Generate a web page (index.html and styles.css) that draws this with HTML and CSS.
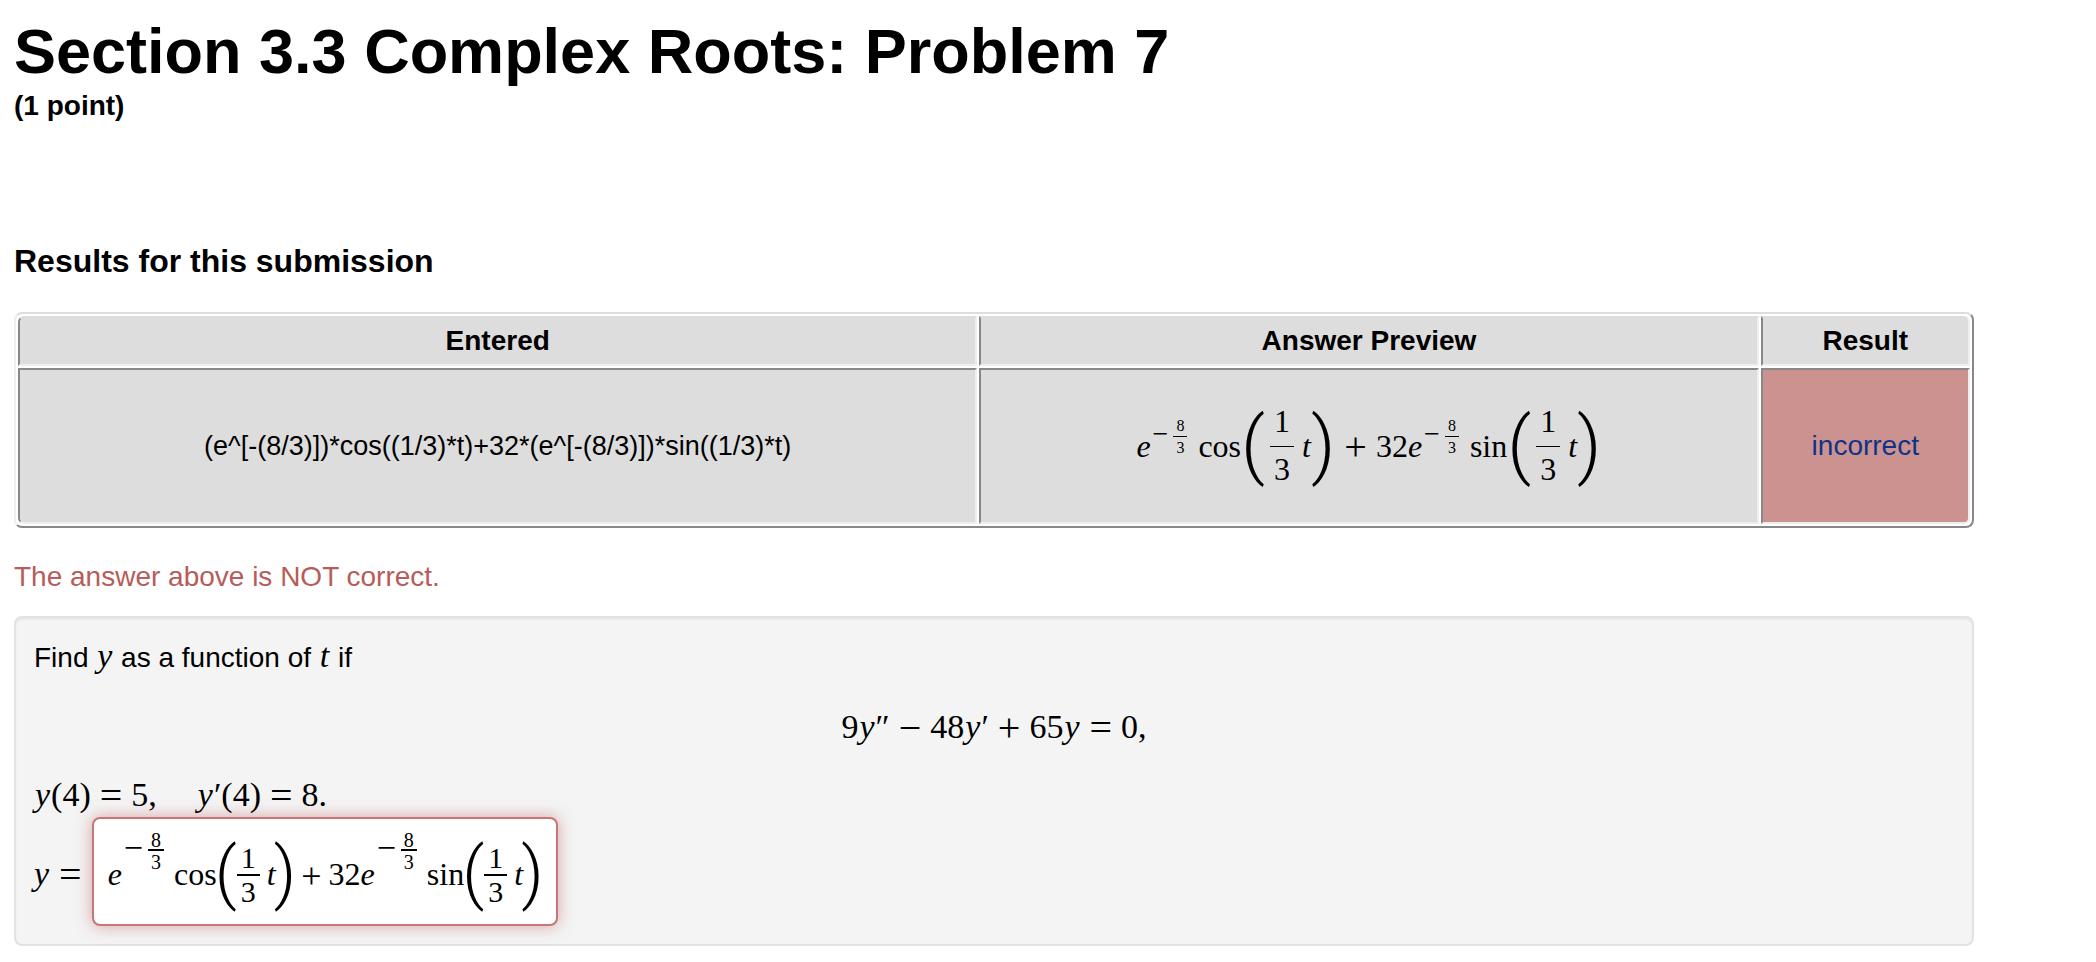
FILE: index.html
```html
<!DOCTYPE html>
<html lang="en">
<head>
    <meta charset="UTF-8">
    <meta name="viewport" content="width=device-width, initial-scale=1.0">
    <title>Section 3.3 Complex Roots: Problem 7</title>
    <link rel="stylesheet" href="styles.css">
</head>
<body>
    <div class="page">
        <h1>Section 3.3 Complex Roots: Problem 7</h1>
        <p class="points">(1 point)</p>

        <!-- Submission results -->
        <h2>Results for this submission</h2>
        <table class="results">
            <colgroup>
                <col class="col-entered">
                <col class="col-preview">
                <col>
            </colgroup>
            <thead>
                <tr>
                    <th scope="col">Entered</th>
                    <th scope="col">Answer Preview</th>
                    <th scope="col">Result</th>
                </tr>
            </thead>
            <tbody>
                <tr>
                    <td class="entered">(e^[-(8/3)])*cos((1/3)*t)+32*(e^[-(8/3)])*sin((1/3)*t)</td>
                    <td>
                        <span class="math preview"><i>e</i><span class="sup">−<span class="frac"><span>8</span><span>3</span></span></span><span class="fn">cos</span><span class="paren">(</span><span class="frac"><span>1</span><span>3</span></span><i>t</i><span class="paren">)</span><span class="op">+</span>32<i>e</i><span class="sup">−<span class="frac"><span>8</span><span>3</span></span></span><span class="fn">sin</span><span class="paren">(</span><span class="frac"><span>1</span><span>3</span></span><i>t</i><span class="paren">)</span></span>
                    </td>
                    <td class="incorrect"><a href="#answer">incorrect</a></td>
                </tr>
            </tbody>
        </table>
        <p class="message">The answer above is NOT correct.</p>

        <!-- Problem text -->
        <div class="problem">
            <p>Find <i class="math">y</i> as a function of <i class="math">t</i> if</p>
            <p class="math equation">9<i>y</i>″<span class="op">−</span>48<i>y</i>′<span class="op">+</span>65<i>y</i><span class="op">=</span>0,</p>
            <p class="math"><i>y</i>(4)<span class="op">=</span>5,<span class="quad"></span><i>y</i>′(4)<span class="op">=</span>8.</p>
            <div class="answer-row">
                <span class="math" id="answer-label"><i>y</i><span class="op">=</span></span>
                <div class="math answer" id="answer" role="textbox" contenteditable="true" spellcheck="false" aria-labelledby="answer-label"><i>e</i><span class="sup">−<span class="frac"><span>8</span><span>3</span></span></span><span class="fn">cos</span><span class="paren">(</span><span class="frac"><span>1</span><span>3</span></span><i>t</i><span class="paren">)</span><span class="op">+</span>32<i>e</i><span class="sup">−<span class="frac"><span>8</span><span>3</span></span></span><span class="fn">sin</span><span class="paren">(</span><span class="frac"><span>1</span><span>3</span></span><i>t</i><span class="paren">)</span></div>
            </div>
        </div>
    </div>
</body>
</html>
```
FILE: styles.css
```css
* {
    box-sizing: border-box;
}

body {
    margin: 0;
    background-color: #fff;
    color: #000;
    font-family: "Liberation Sans", Arial, sans-serif;
    font-size: 28px;
    line-height: 40px;
}

.page {
    padding: 16px 122px 18px 14px;
}

h1, h2, p {
    margin: 0;
}

h1 {
    font-size: 63px;
    line-height: 70px;
}

.points {
    font-weight: bold;
}

h2 {
    margin-top: 115px;
    font-size: 32px;
}

/* results table */
.results {
    width: 100%;
    margin-top: 31px;
    table-layout: fixed;
    border: 2px solid;
    border-color: #ddd #888 #888 #eee;
    border-radius: 8px;
    border-collapse: separate;
    border-spacing: 2px;
    text-align: center;
}

.col-entered {
    width: 49.25%;
}

.col-preview {
    width: 40%;
}

.results th,
.results td {
    padding: 4px;
    background-color: #ddd;
    border: 2px solid;
    border-color: #888 #eee #eee #888;
}

.results th {
    height: 50px;
    padding: 3px;
    border-top-color: #ddd;
}

.results td {
    height: 156px;
}

.results th:first-child {
    border-top-left-radius: 6px;
}

.results th:last-child {
    border-top-right-radius: 6px;
}

.results td:first-child {
    border-bottom-left-radius: 6px;
}

.results td:last-child {
    border-bottom-right-radius: 6px;
}

.entered {
    font-size: 27px;
}

.results .incorrect {
    background-color: #cb9290;
}

.incorrect a {
    color: #0f3388;
    text-decoration: none;
}

.message {
    margin-top: 29px;
    color: #b75c59;
}

/* problem box */
.problem {
    margin-top: 19px;
    padding: 18px;
    background-color: #f4f4f4;
    border: 2px solid #e2e2e2;
    border-radius: 8px;
    box-shadow: inset 0 2px 2px rgba(0, 0, 0, 0.05);
}

.problem p i {
    margin: 0 1px;
}

.equation {
    margin: 29px 0 28px;
    text-align: center;
}

.answer-row {
    display: flex;
    align-items: baseline;
    margin-top: 2px;
}

.answer {
    height: 109px;
    padding: 7px 14px 0;
    background-color: #fff;
    border: 2px solid #c67775;
    border-radius: 8px;
    box-shadow: 0 0 16px rgba(190, 80, 80, 0.5);
    outline: none;
}

/* math */
.math {
    font-family: "Liberation Serif", "Times New Roman", serif;
    font-size: 34px;
    white-space: nowrap;
}

.op {
    margin: 0 9px;
    font-size: 40px;
    line-height: 0;
    vertical-align: -3px;
}

.quad {
    margin-left: 40px;
}

#answer-label .op {
    margin: 0 10px;
}

.preview,
.answer {
    font-size: 32px;
    line-height: 96px;
}

.fn {
    margin-left: 11px;
}

/* tall delimiters around the fractions */
.paren {
    font-family: Roboto, sans-serif;
    font-size: 75px;
    font-weight: 300;
    line-height: 0;
    vertical-align: -13px;
}

.frac {
    display: inline-flex;
    flex-direction: column;
    margin: 0 8px 0 5px;
    line-height: 32px;
    text-align: center;
    vertical-align: 25px;
}

.frac span {
    padding: 0 4px;
}

.frac span:first-child {
    padding-bottom: 9px;
    border-bottom: 1px solid #000;
}

.frac span:last-child {
    padding-top: 6px;
}

.sup {
    margin-left: 2px;
    font-size: 28px;
    line-height: 0;
    vertical-align: 14px;
}

.sup .frac {
    margin: 0 0 0 5px;
    font-size: 16px;
    line-height: 16px;
    vertical-align: 12px;
}

.sup .frac span {
    padding: 0 3px;
}

.sup .frac span:first-child {
    padding-bottom: 2px;
}

.sup .frac span:last-child {
    padding-top: 3px;
}

/* the answer box sets its fractions tighter, with heavier bars */
.answer .fn {
    margin-left: 10px;
}

.answer .op {
    margin: 0 7px;
    font-size: 36px;
}

.answer .paren {
    margin: 0 -2px;
    font-size: 69px;
    vertical-align: -11px;
}

.answer .frac {
    margin: 0 7px 0 2px;
    font-size: 30px;
    line-height: 28px;
    vertical-align: 17px;
}

.answer .frac span:first-child {
    padding-bottom: 2px;
    border-bottom-width: 2px;
}

.answer .frac span:last-child {
    padding-top: 2px;
}

.answer .sup {
    font-size: 34px;
    vertical-align: 26px;
}

.answer .sup .frac {
    margin: 0 0 0 5px;
    font-size: 20px;
    line-height: 18px;
    vertical-align: 12px;
}

.answer .sup .frac span:first-child {
    padding-bottom: 0;
}

.answer .sup .frac span:last-child {
    padding-top: 2px;
}
```
